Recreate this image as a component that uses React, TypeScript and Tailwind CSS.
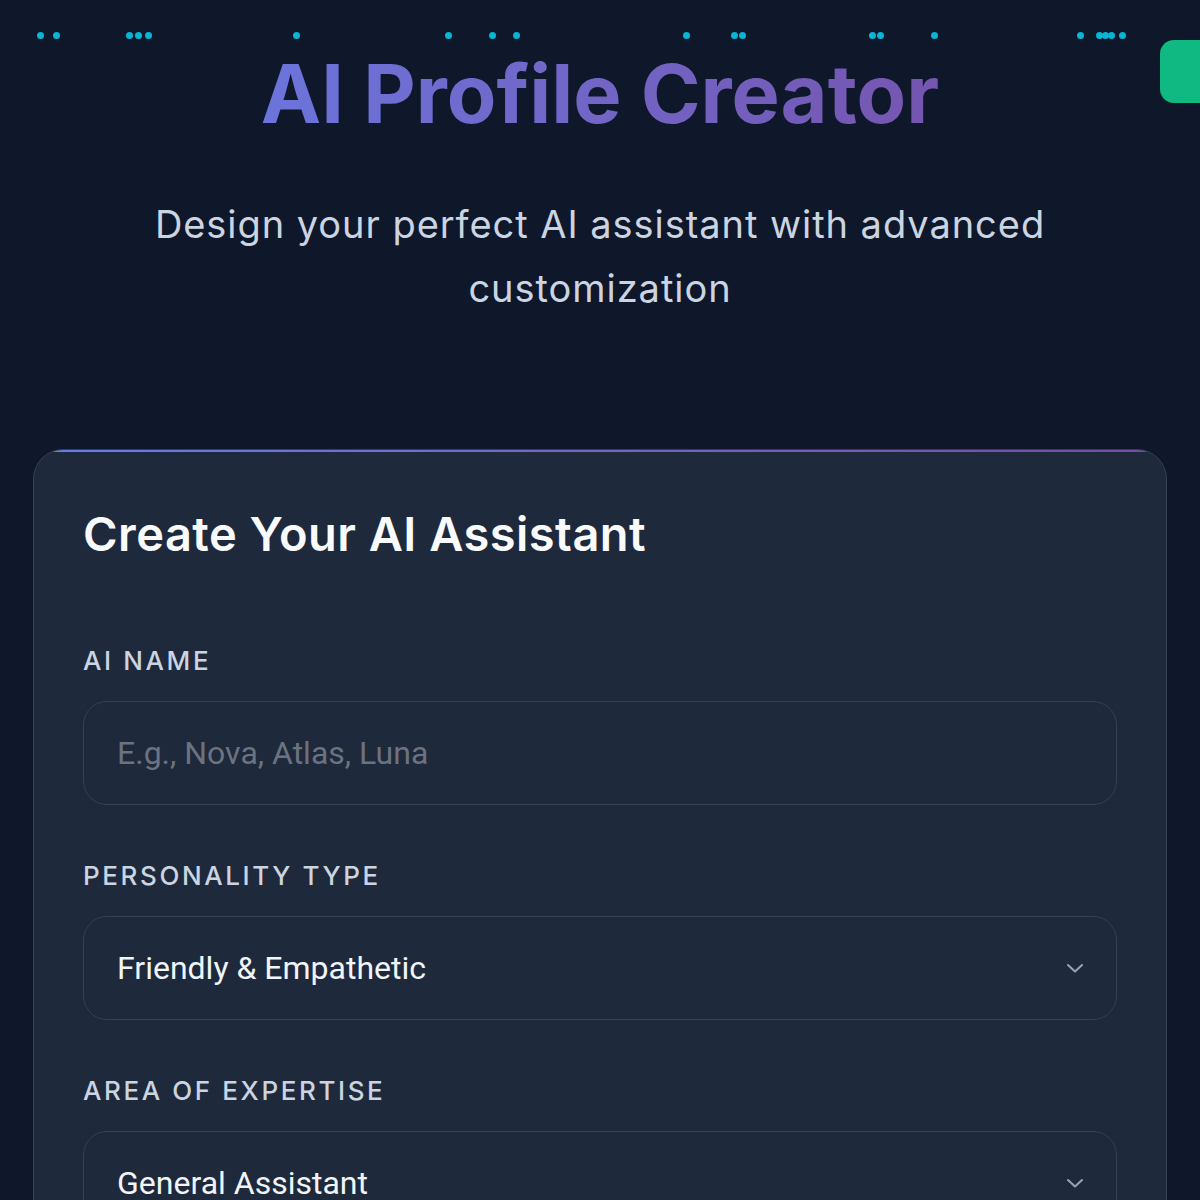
import React from "react";

const dots = [40, 56, 129, 138, 148, 296, 448, 492, 516, 686, 734, 742, 872, 880, 934, 1080, 1099, 1105, 1111, 1122];

function Chevron() {
  return (
    <svg width="28" height="28" viewBox="0 0 24 24" fill="none" stroke="#94a3b8" strokeWidth="1.8" strokeLinecap="round" strokeLinejoin="round">
      <path d="M6 9.5l6 5.5 6-5.5" />
    </svg>
  );
}

function Select({ value }: { value: string }) {
  return (
    <div className="h-[104px] w-full rounded-[24px] border border-[#334155] bg-[#1e293b] flex items-center justify-between pl-[33px] pr-[27px]">
      <span className="text-[32px] text-[#f1f5f9]" style={{ fontFamily: "Roboto, 'Liberation Sans', sans-serif" }}>{value}</span>
      <Chevron />
    </div>
  );
}

function Label({ children }: { children: React.ReactNode }) {
  return (
    <div className="text-[26px] leading-[39px] font-medium tracking-[0.1em] text-[#cbd5e1] mb-[21px]">{children}</div>
  );
}

export default function App() {
  return (
    <div className="relative min-h-screen overflow-hidden bg-[#0f172a]" style={{ fontFamily: "Inter, 'Noto Sans', sans-serif" }}>
      {dots.map((x, i) => (
        <div key={i} className="absolute top-[32px] h-[7px] w-[7px] rounded-full bg-[#06b6d4]" style={{ left: x - 3.5 }} />
      ))}
      <div className="absolute left-[1160px] top-[40px] h-[63px] w-[80px] rounded-[14px] bg-[#10b981]" />

      <div className="px-[33px] pt-[46px]">
        <h1 className="text-center text-[81px] leading-[96px] font-bold bg-gradient-to-r from-[#667eea] to-[#764ba2] bg-clip-text text-transparent">
          AI Profile Creator
        </h1>
        <p className="mx-auto mt-[50px] max-w-[960px] text-center text-[38px] leading-[64px] tracking-[0.025em] text-[#cbd5e1]">
          Design your perfect AI assistant with advanced customization
        </p>

        <div className="relative mt-[129px] overflow-hidden rounded-[30px] border border-[#334155] bg-[#1e293b] px-[49px] pt-[56px] pb-[60px]">
          <div className="absolute left-0 right-0 top-0 h-[2px] bg-gradient-to-r from-[#667eea] to-[#764ba2]" />
          <h2 className="text-[47px] leading-[56px] font-semibold tracking-[0.01em] text-[#f8fafc]">Create Your AI Assistant</h2>

          <div className="mt-[79px]">
            <Label>AI NAME</Label>
            <div className="h-[104px] w-full rounded-[24px] border border-[#334155] bg-[#1e293b] flex items-center pl-[33px]">
              <span className="text-[32px] text-[#6b7280]" style={{ fontFamily: "Roboto, 'Liberation Sans', sans-serif" }}>E.g., Nova, Atlas, Luna</span>
            </div>
          </div>

          <div className="mt-[51px]">
            <Label>PERSONALITY TYPE</Label>
            <Select value="Friendly & Empathetic" />
          </div>

          <div className="mt-[51px]">
            <Label>AREA OF EXPERTISE</Label>
            <Select value="General Assistant" />
          </div>
        </div>
      </div>
    </div>
  );
}
